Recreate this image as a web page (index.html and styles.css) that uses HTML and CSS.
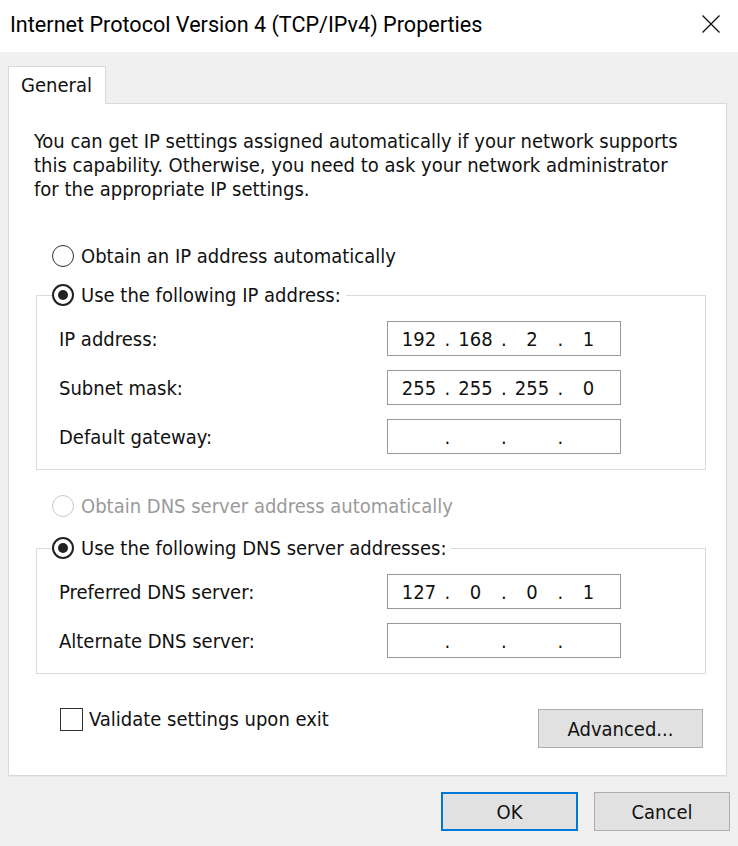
FILE: index.html
```html
<!DOCTYPE html>
<html lang="en">
<head>
<meta charset="utf-8">
<title>Internet Protocol Version 4 (TCP/IPv4) Properties</title>
<link rel="stylesheet" href="styles.css">
</head>
<body>
<div class="dialog">
  <div class="titlebar">
    <span class="title">Internet Protocol Version 4 (TCP/IPv4) Properties</span>
    <svg class="close" width="18" height="18" viewBox="0 0 18 18"><path d="M0.5 0.5 L17.5 17.5 M17.5 0.5 L0.5 17.5" stroke="#111" stroke-width="1.3" fill="none"/></svg>
  </div>
  <div class="body">
    <div class="tabs"><div class="tab">General</div></div>
    <div class="panel">
      <p class="intro">You can get IP settings assigned automatically if your network supports<br>this capability. Otherwise, you need to ask your network administrator<br>for the appropriate IP settings.</p>

      <div class="option first"><span class="radio"></span><span>Obtain an IP address automatically</span></div>

      <div class="group">
        <div class="legend"><span class="radio checked"></span><span>Use the following IP address:</span></div>
        <div class="rows">
          <div class="row"><span>IP address:</span><div class="ip"><span>192</span><i>.</i><span>168</span><i>.</i><span>2</span><i>.</i><span>1</span></div></div>
          <div class="row"><span>Subnet mask:</span><div class="ip"><span>255</span><i>.</i><span>255</span><i>.</i><span>255</span><i>.</i><span>0</span></div></div>
          <div class="row"><span>Default gateway:</span><div class="ip"><span></span><i>.</i><span></span><i>.</i><span></span><i>.</i><span></span></div></div>
        </div>
      </div>

      <div class="option disabled"><span class="radio"></span><span>Obtain DNS server address automatically</span></div>

      <div class="group second">
        <div class="legend"><span class="radio checked"></span><span>Use the following DNS server addresses:</span></div>
        <div class="rows">
          <div class="row"><span>Preferred DNS server:</span><div class="ip"><span>127</span><i>.</i><span>0</span><i>.</i><span>0</span><i>.</i><span>1</span></div></div>
          <div class="row"><span>Alternate DNS server:</span><div class="ip"><span></span><i>.</i><span></span><i>.</i><span></span><i>.</i><span></span></div></div>
        </div>
      </div>

      <div class="footer-row">
        <div class="check"><span class="box"></span><span>Validate settings upon exit</span></div>
        <div class="btn advanced">Advanced...</div>
      </div>
    </div>
    <div class="actions">
      <div class="btn ok">OK</div>
      <div class="btn cancel">Cancel</div>
    </div>
  </div>
</div>
</body>
</html>
```
FILE: styles.css
```css
* { box-sizing: border-box; }
html, body { margin: 0; padding: 0; }
body {
  width: 738px;
  height: 846px;
  background: #f0f0f0;
  font-family: "DejaVu Sans Condensed", "DejaVu Sans", sans-serif;
  font-stretch: condensed;
  font-size: 20px;
  color: #111;
  overflow: hidden;
}
.titlebar {
  height: 52px;
  background: #fff;
  display: flex;
  align-items: center;
  justify-content: space-between;
  padding: 0 18px 0 10px;
}
.title {
  font-family: Roboto, "Noto Sans", sans-serif;
  font-stretch: normal;
  font-size: 21.6px;
  color: #000;
  margin-top: -3px;
}
.close { display: block; margin-top: -4px; }
.body { padding: 14px 11px 0 8px; }
.tabs { display: flex; }
.tab {
  position: relative;
  z-index: 1;
  width: 98px;
  height: 38px;
  margin-bottom: -1px;
  background: #fff;
  border: 1px solid #d9d9d9;
  border-bottom: none;
  padding: 6px 0 0 12px;
  line-height: 24px;
}
.panel {
  height: 673px;
  background: #fff;
  border: 1px solid #d9d9d9;
  box-shadow: 0 1px 0 #e6e6e6;
  padding: 25px 0 0 0;
}
.intro {
  margin: 0 0 0 25px;
  line-height: 24px;
  white-space: nowrap;
}
.option {
  display: flex;
  align-items: center;
  gap: 7px;
  height: 24px;
  margin-left: 43px;
  white-space: nowrap;
}
.option.first { margin-top: 43px; }
.option.disabled { margin-top: 24px; color: #9a9a9a; }
.radio {
  width: 22px;
  height: 22px;
  border-radius: 50%;
  border: 1.5px solid #333;
  background: #fff;
  display: flex;
  align-items: center;
  justify-content: center;
  flex: none;
}
.radio.checked { border-width: 2px; border-color: #222; }
.radio.checked::after {
  content: "";
  width: 10px;
  height: 10px;
  border-radius: 50%;
  background: #222;
}
.option.disabled .radio { border-color: #c9c9c9; }
.group {
  width: 670px;
  margin: 27px 0 0 27px;
  border: 1px solid #dcdcdc;
  padding: 0 84px 15px 22px;
}
.group.second { margin-top: 30px; }
.legend {
  display: flex;
  align-items: center;
  gap: 7px;
  height: 24px;
  width: max-content;
  margin: -13px 0 0 -7px;
  padding-right: 5px;
  background: #fff;
  white-space: nowrap;
}
.rows {
  display: flex;
  flex-direction: column;
  gap: 14px;
  margin-top: 14px;
}
.row {
  display: flex;
  align-items: center;
  justify-content: space-between;
  height: 35px;
}
.ip {
  width: 234px;
  height: 35px;
  border: 1px solid #9a9a9a;
  display: flex;
  align-items: center;
  padding-left: 9px;
}
.ip span {
  width: 44px;
  text-align: center;
}
.ip i {
  font-style: normal;
  width: 12.5px;
  text-align: center;
}
.footer-row {
  display: flex;
  align-items: flex-start;
  justify-content: space-between;
  margin-top: 33px;
  padding: 0 23px 0 51px;
}
.check {
  display: flex;
  align-items: center;
  gap: 6px;
  height: 24px;
}
.box {
  width: 23px;
  height: 23px;
  border: 1px solid #333;
  background: #fff;
}
.btn {
  height: 39px;
  background: #e1e1e1;
  border: 1px solid #adadad;
  display: flex;
  align-items: center;
  justify-content: center;
}
.advanced { width: 165px; margin-top: 2px; }
.actions {
  display: flex;
  justify-content: flex-end;
  gap: 16px;
  margin-top: 16px;
  margin-right: -3px;
}
.ok { width: 137px; border: 2px solid #0078d7; }
.cancel { width: 136px; }
```
